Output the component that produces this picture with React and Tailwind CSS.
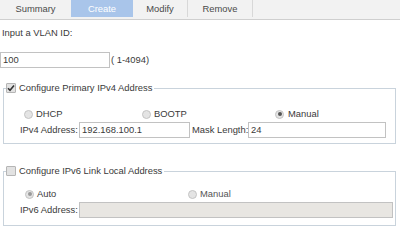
import React from "react";

const Radio = ({ checked, faint }) => (
  <span className="inline-flex items-center justify-center w-[9px] h-[9px] rounded-full border border-[#c4c4c4] bg-[#e4e4e4] shrink-0">
    {checked && <span className={"w-[4px] h-[4px] rounded-full " + (faint ? "bg-[#9a9a9a]" : "bg-[#555]")}></span>}
  </span>
);

const Check = ({ checked }) => (
  <span className="inline-flex items-center justify-center w-[10px] h-[10px] border border-[#b5b5b5] bg-[#e2e2e2] rounded-[1px] shrink-0">
    {checked && (
      <svg width="8" height="8" viewBox="0 0 8 8">
        <path d="M1 4.2 L3 6.3 L7 1.5" stroke="#333" strokeWidth="1.6" fill="none" />
      </svg>
    )}
  </span>
);

const Field = ({ w, value, disabled }) => (
  <div className={"h-[16px] shrink-0 border border-[#c2c2c2] flex items-center px-[2px] " + w + (disabled ? " bg-[#e8e6e2]" : " bg-white")}>
    {value}
  </div>
);

export default function App() {
  const tabs = [
    { label: "Summary", w: "w-[71px]" },
    { label: "Create", w: "w-[62px]", active: true },
    { label: "Modify", w: "w-[55px] border-r border-[#d8d8d8]" },
    { label: "Remove", w: "w-[65px] border-r border-[#d8d8d8]" },
  ];
  return (
    <div className="w-[400px] h-[229px] bg-white text-[#3a3a3a] text-[9.4px] leading-[12px] overflow-hidden whitespace-nowrap" style={{ fontFamily: '"Liberation Sans", Arial, sans-serif' }}>
      <div className="h-[20px] bg-[#f2f2f2] border-b border-[#cfcfcf] flex">
        {tabs.map((t) => (
          <div key={t.label} className={"h-[17px] flex items-center justify-center " + t.w + (t.active ? " bg-[#a9c5ea] text-white" : " text-[#4a4a4a]")}>
            {t.label}
          </div>
        ))}
      </div>

      <div className="pl-[2px] mt-[7px]">Input a VLAN ID:</div>
      <div className="flex items-center mt-[13px]">
        <Field w="w-[110px]" value="100" />
        <span className="ml-[1px]">( 1-4094)</span>
      </div>

      <fieldset className="ml-[3px] w-[393px] mt-[14px] border border-[#c9d3dc] pb-[5px]">
        <legend className="ml-[2px] flex items-center gap-[3px] pr-[2px]">
          <Check checked />
          <span>Configure Primary IPv4 Address</span>
        </legend>
        <div className="flex items-center mt-[14px] pl-[20px]">
          <div className="w-[118px] flex items-center gap-[3px]"><Radio /><span>DHCP</span></div>
          <div className="w-[133px] flex items-center gap-[3px]"><Radio /><span>BOOTP</span></div>
          <div className="flex items-center gap-[4px]"><Radio checked /><span>Manual</span></div>
        </div>
        <div className="flex items-center mt-[2px] pl-[16px]">
          <span className="w-[59px] shrink-0">IPv4 Address:</span>
          <Field w="w-[111px]" value="192.168.100.1" />
          <span className="ml-[2px] w-[56px] shrink-0">Mask Length:</span>
          <Field w="w-[138px]" value="24" />
        </div>
      </fieldset>

      <fieldset className="ml-[3px] w-[393px] mt-[21px] border border-[#c9d3dc] pb-[7px]">
        <legend className="ml-[2px] flex items-center gap-[3px] pr-[2px]">
          <Check />
          <span>Configure IPv6 Link Local Address</span>
        </legend>
        <div className="flex items-center mt-[11px] pl-[21px]">
          <div className="w-[163px] flex items-center gap-[3px]"><Radio checked faint /><span>Auto</span></div>
          <div className="flex items-center gap-[3px] text-[#555]"><Radio /><span>Manual</span></div>
        </div>
        <div className="flex items-center mt-[2px] pl-[16px]">
          <span className="w-[59px] shrink-0">IPv6 Address:</span>
          <Field w="w-[314px]" value="" disabled />
        </div>
      </fieldset>
    </div>
  );
}
